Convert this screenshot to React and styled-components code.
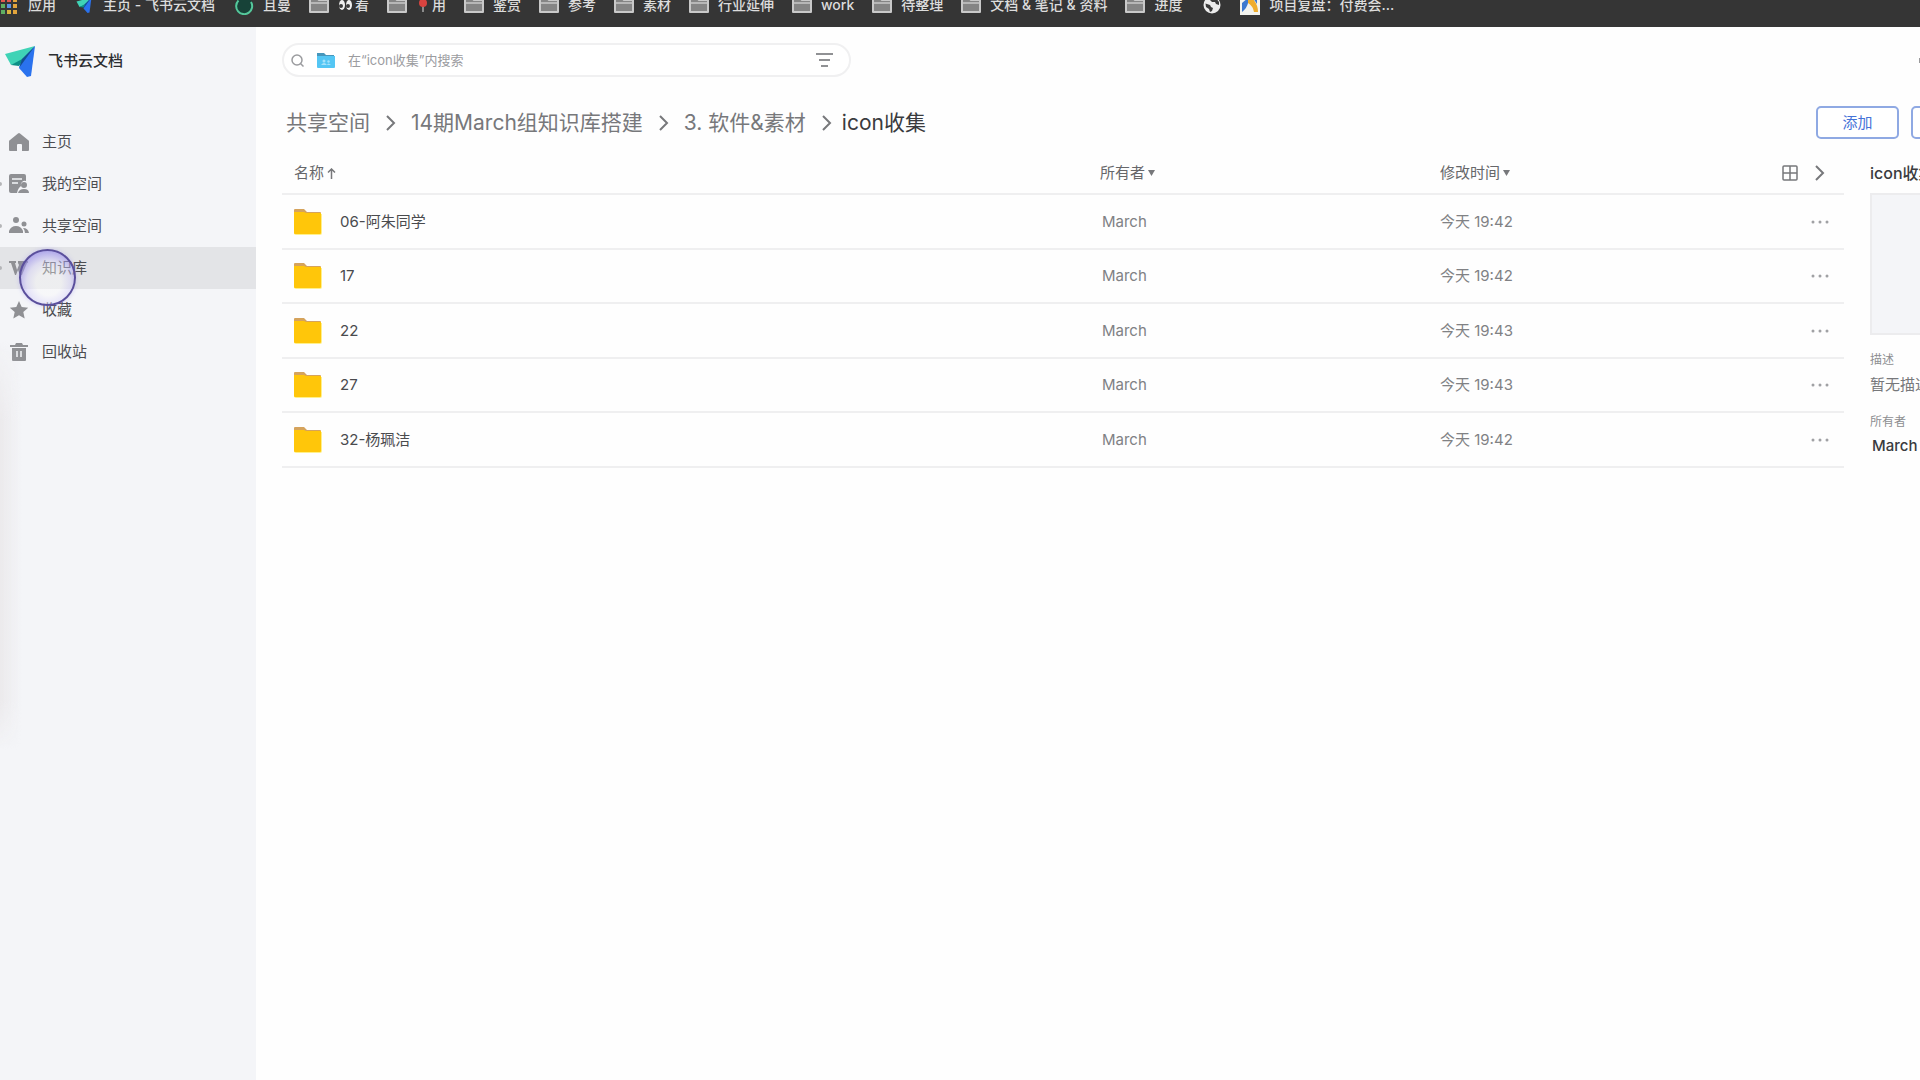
import React from "react";
import styled, { createGlobalStyle } from "styled-components";

const Global = createGlobalStyle`
  *, *::before, *::after { box-sizing: border-box; }
  html, body, #root { height: 100%; margin: 0; }
  body {
    overflow: hidden;
    background: #fefefe;
    color: #4a4b4e;
    font-family: Inter, "Noto Sans CJK SC", sans-serif;
    font-size: 15px;
    line-height: 20px;
  }
  button, input { font: inherit; color: inherit; }
  button { padding: 0; border: 0; background: none; cursor: pointer; }
  a { color: inherit; text-decoration: none; }
  svg { display: block; flex: none; }
`;

const Page = styled.div`
  position: relative;
  display: flex;
  flex-direction: column;
  height: 100%;
  overflow: hidden;
`;

/* Browser bookmarks, cut off by the top of the window */
const Bookmarks = styled.nav`
  display: flex;
  flex: none;
  align-items: flex-start;
  gap: 18px;
  height: 27px;
  overflow: hidden;
  background: #353535;
  color: #dcdcdc;
  font-size: 14px;
  font-weight: 500;
  white-space: nowrap;
`;

const Bookmark = styled.a`
  display: flex;
  align-items: center;
  gap: 9px;
  height: 20px;
  margin-top: -5px;
`;

const BookmarkText = styled.span`
  display: flex;
  align-items: center;
  gap: 2px;
`;

const Body = styled.div`
  display: flex;
  flex: 1;
  min-height: 0;
`;

const Sidebar = styled.aside`
  flex: none;
  width: 256px;
  background: #f4f5f8;
`;

const Brand = styled.a`
  display: flex;
  align-items: center;
  gap: 12px;
  height: 68px;
  padding-left: 4px;
  color: #2b2d31;
  font-weight: 500;
`;

const NavList = styled.ul`
  margin: 26px 0 0;
  padding: 0;
  list-style: none;
`;

const NavLink = styled.a`
  display: flex;
  align-items: center;
  height: 42px;
  background: ${(p) => (p.$active ? "#e3e4e7" : "transparent")};
  color: #4c4d51;
`;

const Expander = styled.span`
  width: 9px;
  height: 4px;
  &::before {
    content: "";
    display: block;
    width: 2px;
    height: 4px;
    border-radius: 0 2px 2px 0;
    background: ${(p) => (p.$shown ? "#b4b5b8" : "transparent")};
  }
`;

const NavText = styled.span`
  margin-left: 13px;
`;

const Main = styled.main`
  display: flex;
  flex: 1;
  flex-direction: column;
  min-width: 0;
  padding-left: 26px;
  overflow: hidden;
`;

const TopBar = styled.header`
  display: flex;
  align-items: center;
  justify-content: space-between;
  height: 66px;
`;

const Search = styled.form`
  display: flex;
  align-items: center;
  width: 569px;
  height: 34px;
  padding: 0 16px 0 7px;
  border: 2px solid #f0f0f1;
  border-radius: 17px;
  background: #fff;
`;

const SearchInput = styled.input`
  flex: 1;
  min-width: 0;
  margin: 0 13px;
  padding: 0;
  border: 0;
  outline: 0;
  background: none;
  font-size: 13px;
  &::placeholder { color: #9b9c9f; opacity: 1; }
`;

const SearchScope = styled.span`
  margin-left: 13px;
`;

const AccountButton = styled.button`
  width: 1px;
  height: 5px;
  background: #9a9a9c;
`;

const PathBar = styled.div`
  display: flex;
  align-items: center;
  height: 59px;
`;

const Crumbs = styled.ol`
  display: flex;
  flex: 1;
  align-items: center;
  margin: 0;
  padding: 0 0 0 4px;
  list-style: none;
  font-size: 21px;
  line-height: 28px;
  white-space: nowrap;
`;

const Crumb = styled.li`
  display: flex;
  align-items: center;
  color: ${(p) => (p.$current ? "#3a3b3e" : "#77787b")};
  svg { margin: 0 ${(p) => (p.$tight ? 10 : 15)}px 0 16px; color: #77787b; }
`;

const Actions = styled.div`
  display: flex;
  flex: none;
  gap: 12px;
  width: 104px;
  overflow: hidden;
`;

const ActionButton = styled.button`
  flex: none;
  width: 83px;
  height: 33px;
  border: 2px solid #8fa9e3;
  border-radius: 5px;
  background: #fff;
  color: #4673d8;
`;

const Content = styled.div`
  display: grid;
  grid-template-columns: minmax(0, 1fr) 50px;
  gap: 26px;
  padding-top: 1px;
`;

const FileTable = styled.table`
  width: 100%;
  border-collapse: separate;
  border-spacing: 0;
  table-layout: fixed;
`;

const Col = styled.col`
  width: ${(p) => p.$width};
`;

const HeadCell = styled.th`
  height: 42px;
  padding: 0 0 0 ${(p) => p.$indent || 0}px;
  border-bottom: 2px solid #efeff0;
  color: #66676a;
  font-weight: 400;
  text-align: left;
`;

const SortButton = styled.button`
  display: flex;
  align-items: center;
  gap: 3px;
`;

const ViewTools = styled.div`
  display: flex;
  align-items: center;
  justify-content: flex-end;
  gap: 17px;
  padding-right: 19px;
  color: #77787b;
`;

const Row = styled.tr`
  height: 55px;
  &:nth-child(even) { height: 54px; }
`;

const Cell = styled.td`
  padding: 0 0 0 ${(p) => p.$indent || 0}px;
  border-bottom: 2px solid #efeff0;
  color: #808184;
`;

const FileLink = styled.a`
  display: flex;
  align-items: center;
  gap: 18px;
  color: #4a4b4e;
`;

const MoreButton = styled.button`
  display: block;
  margin-left: auto;
  padding-right: 14px;
  color: #a0a1a4;
`;

const Panel = styled.aside`
  overflow: hidden;
  white-space: nowrap;
`;

const PanelTitle = styled.h2`
  margin: 0;
  height: 40px;
  color: #3a3b3e;
  font-size: 16px;
  font-weight: 500;
  line-height: 40px;
`;

const Preview = styled.div`
  width: 250px;
  height: 142px;
  margin-bottom: 15px;
  border: 2px solid #ececee;
  background: #f4f5f8;
`;

const PanelLabel = styled.p`
  margin: 0;
  color: #8d8e91;
  font-size: 12px;
`;

const PanelText = styled.p`
  margin: 5px 0 17px;
  color: #77787b;
`;

const PanelOwner = styled.p`
  margin: 4px 0 0;
  padding-left: 2px;
  color: #3a3b3e;
  font-weight: 500;
`;

/* Soft shadow thrown on the page by a window to the left */
const EdgeShade = styled.div`
  position: absolute;
  top: 340px;
  left: 0;
  width: 22px;
  height: 410px;
  background: linear-gradient(90deg, rgba(232, 229, 231, 0.7), rgba(240, 238, 243, 0));
  mask-image: linear-gradient(transparent, #000 20%, #000 88%, transparent);
  pointer-events: none;
`;

/* Click marker of the screen recorder */
const Pointer = styled.div`
  position: absolute;
  top: 249px;
  left: 19px;
  width: 57px;
  height: 57px;
  border: 2px solid #5a4f9c;
  border-radius: 50%;
  background: radial-gradient(circle at 52% 60%, rgba(250, 250, 250, 0.45) 30%, rgba(215, 210, 250, 0.45) 52%, rgba(130, 115, 235, 0.6) 80%);
  box-shadow: 0 0 4px rgba(150, 140, 240, 0.4);
  pointer-events: none;
`;

const Plane = ({ size, box = size }) => (
  <svg width={box} height={size} viewBox="0 0 32 32" aria-hidden="true">
    <path d="M1 9 31 1 22 12 15 17 7 20Z" fill="#3fd3b6" />
    <path d="M7 20 22 12 15 21Z" fill="#0b8f86" />
    <path d="M31 1 27 31 23 32 15 23 18 15Z" fill="#2a72ee" />
    <path d="M31 1 15 23 18 14Z" fill="#124e91" />
  </svg>
);

const AppsIcon = () => (
  <svg width="19" height="20" viewBox="1 0 19 20" aria-hidden="true">
    {["#e0584f", "#e0584f", "#e2a43c", "#5fae62", "#5a93e6", "#e2a43c", "#5fae62", "#d8b23e", "#e2a43c"].map((c, i) => (
      <rect key={i} x={2 + (i % 3) * 6} y={3 + Math.floor(i / 3) * 6} width="4" height="4" fill={c} />
    ))}
  </svg>
);

const RingIcon = () => (
  <svg width="21" height="20" viewBox="0 0 21 20" fill="none" aria-hidden="true">
    <circle cx="11" cy="11" r="9" fill="#174238" />
    <path d="M5.500 5.500A8 8 0 1 0 18 7" stroke="#55c79b" strokeWidth="2" />
  </svg>
);

const FolderOutline = () => (
  <svg width="20" height="20" viewBox="0 0 20 20" aria-hidden="true">
    <path d="M1 4V3h7l2 2h9v12H1Z" fill="#858585" stroke="#c9c9c9" strokeWidth="2" strokeLinejoin="round" />
    <path d="M1 8h18" stroke="#c9c9c9" strokeWidth="1.500" />
  </svg>
);

const Eyes = () => (
  <svg width="15" height="14" viewBox="0 0 15 14" role="img" aria-label="👀">
    <ellipse cx="4" cy="7" rx="3" ry="5" fill="#efefef" />
    <ellipse cx="11" cy="7" rx="3" ry="5" fill="#efefef" />
    <circle cx="3" cy="8" r="2" fill="#3a3a3a" />
    <circle cx="10" cy="8" r="2" fill="#3a3a3a" />
  </svg>
);

const Pin = () => (
  <svg width="14" height="14" viewBox="0 0 14 14" role="img" aria-label="📍">
    <path d="M7 6v8" stroke="#a9a9a9" strokeWidth="1.500" />
    <circle cx="7" cy="5" r="4" fill="#d8433f" />
  </svg>
);

const Globe = () => (
  <svg width="22" height="20" viewBox="0 0 22 20" aria-hidden="true">
    <circle cx="12" cy="10" r="8.500" fill="#ececec" />
    <path d="M5.500 8.500 10 10l1 2 2 1-1 3-2 1-1-3-3-2ZM11 3l5 0 3 4 0 3-3-1-1-2-3 0-2-2Z" fill="#3b3b3b" />
  </svg>
);

const SquareLogo = () => (
  <svg width="20" height="20" viewBox="0 0 20 20" aria-hidden="true">
    <path d="M0 0h20v20H0Z" fill="#f3f3ee" />
    <path d="M2 17V8l6-5v5Q7 13 2 17Z" fill="#3d79cf" />
    <path d="M8 3h4q6 6 6 14h-4Q13 11 8 8Z" fill="#efad2e" />
    <path d="M13 3h4v6Z" fill="#3d79cf" />
  </svg>
);

const BlueFolder = () => (
  <svg width="18" height="18" viewBox="0 0 18 18" aria-hidden="true">
    <path d="M0 2h7l2 2h8v5H0Z" fill="#4796bb" />
    <path d="M0 5h18v11a1 1 0 0 1-1 1H1a1 1 0 0 1-1-1Z" fill="#54c6f4" />
    <circle cx="7" cy="10" r="1.500" fill="#a5e2fa" />
    <circle cx="11.500" cy="10.500" r="1.200" fill="#a5e2fa" />
    <path d="M4 14q3-4 6 0ZM10 14q1-3 4 0Z" fill="#a5e2fa" />
  </svg>
);

const YellowFolder = () => (
  <svg width="28" height="28" viewBox="0 0 28 28" aria-hidden="true">
    <path d="M0 2a1 1 0 0 1 1-1h9l3 3h13a1 1 0 0 1 1 1v6H0Z" fill="#d5a35c" />
    <path d="M0 6h28v19a2 2 0 0 1-2 2H2a2 2 0 0 1-2-2Z" fill="#fff08a" />
    <path d="M0 4h10l2 1h15v20a1 1 0 0 1-1 1H1a1 1 0 0 1-1-1Z" fill="#ffc60a" />
  </svg>
);

const Chevron = ({ width = 10, height = 16 }) => (
  <svg width={width} height={height} viewBox="0 0 10 16" fill="none" stroke="currentColor" strokeWidth="2" aria-hidden="true">
    <path d="m1 1 7 7-7 7" />
  </svg>
);

const navIcons = {
  home: <path d="M9 1.500a1.500 1.500 0 0 1 2 0l8 6.500a2 2 0 0 1 1 1.500V18a1 1 0 0 1-1 1h-6v-6a1 1 0 0 0-1-1H9a1 1 0 0 0-1 1v6H1a1 1 0 0 1-1-1V9.500A2 2 0 0 1 1 8Z" />,
  mine: (
    <>
      <path d="M2 0h13a2 2 0 0 1 2 2v5a4 4 0 0 0-5 5q-3 2-4 7H2a2 2 0 0 1-2-2V2a2 2 0 0 1 2-2Z" />
      <path d="M3 5h10M3 9h6" stroke="#f4f5f8" strokeWidth="1.500" />
      <circle cx="15" cy="11" r="3" />
      <path d="M9 19q1-4 6-4t5 4Z" />
    </>
  ),
  shared: (
    <>
      <circle cx="7" cy="4" r="3" />
      <path d="M0 17v-2q2-5 7-5t7 5v2Z" />
      <circle cx="15" cy="8" r="2.500" />
      <path d="M14 12q5 0 6 5h-4q0-3-2-5Z" />
    </>
  ),
  wiki: <path d="M0 3h7v2H6l2 7 2-5-1-2V3h10v2h-1l-5 12h-2l-2-5-2 5H6L2 5H0Z" />,
  star: <path d="m10 1 2.700 6 6.500.7-4.900 4.400 1.400 6.500L10 15.300l-5.700 3.300 1.400-6.500L.8 7.700 7.300 7Z" />,
  trash: (
    <>
      <path d="M7 1h6l1 2h5v2H1V3h5Z" />
      <path d="M3 6h14v12a1 1 0 0 1-1 1H4a1 1 0 0 1-1-1Z" />
      <path d="M8 9v6M12 9v6" stroke="#f4f5f8" strokeWidth="1.500" />
    </>
  ),
};

const bookmarks = [
  { icon: <AppsIcon />, text: "应用" },
  { icon: <Plane size={16} box={20} />, text: "主页 - 飞书云文档" },
  { icon: <RingIcon />, text: "且曼" },
  { text: "看", mark: <Eyes /> },
  { text: "用", mark: <Pin /> },
  { text: "鉴赏" },
  { text: "参考" },
  { text: "素材" },
  { text: "行业延伸" },
  { text: "work" },
  { text: "待整理" },
  { text: "文档 & 笔记 & 资料" },
  { text: "进度" },
  { icon: <Globe />, label: "网页" },
  { icon: <SquareLogo />, text: "项目复盘：付费会..." },
];

const navItems = [
  { icon: "home", text: "主页" },
  { icon: "mine", text: "我的空间", expandable: true },
  { icon: "shared", text: "共享空间", expandable: true },
  { icon: "wiki", text: "知识库", expandable: true, active: true },
  { icon: "star", text: "收藏" },
  { icon: "trash", text: "回收站" },
];

const crumbs = ["共享空间", "14期March组知识库搭建", "3. 软件&素材", "icon收集"];

const files = [
  { name: "06-阿朱同学", time: "今天 19:42" },
  { name: "17", time: "今天 19:42" },
  { name: "22", time: "今天 19:43" },
  { name: "27", time: "今天 19:43" },
  { name: "32-杨珮洁", time: "今天 19:42" },
];

const SortCaret = () => (
  <svg width="7" height="6" viewBox="0 0 7 6" fill="#77787b" aria-hidden="true"><path d="M0 0h7L3.500 6Z" /></svg>
);

export default function App() {
  return (
    <Page>
      <Global />
      <Bookmarks>
        {bookmarks.map((b, i) => (
          <Bookmark href="#" key={i} aria-label={b.label}>
            {b.icon || <FolderOutline />}
            {b.text && <BookmarkText>{b.mark}{b.text}</BookmarkText>}
          </Bookmark>
        ))}
      </Bookmarks>
      <Body>
        <Sidebar>
          <Brand href="#"><Plane size={32} />飞书云文档</Brand>
          <nav>
            <NavList>
              {navItems.map((n) => (
                <li key={n.text}>
                  <NavLink href="#" $active={n.active}>
                    <Expander $shown={n.expandable} />
                    <svg width="20" height="20" viewBox="0 0 20 20" fill="#8f9094" aria-hidden="true">{navIcons[n.icon]}</svg>
                    <NavText>{n.text}</NavText>
                  </NavLink>
                </li>
              ))}
            </NavList>
          </nav>
        </Sidebar>
        <Main>
          <TopBar>
            <Search>
              <svg width="13" height="13" viewBox="0 0 13 13" fill="none" stroke="#9b9c9f" strokeWidth="1.500" aria-hidden="true">
                <circle cx="6" cy="6" r="5" /><path d="m9.500 9.500 3 3" />
              </svg>
              <SearchScope><BlueFolder /></SearchScope>
              <SearchInput type="text" aria-label="搜索" placeholder="在“icon收集”内搜索" />
              <button type="button" aria-label="筛选">
                <svg width="17" height="14" viewBox="0 0 17 14" stroke="#909194" strokeWidth="2" aria-hidden="true">
                  <path d="M0 1h17M3 7h11M5 13h7" />
                </svg>
              </button>
            </Search>
            <AccountButton aria-label="账户" />
          </TopBar>
          <PathBar>
            <Crumbs>
              {crumbs.map((c, i) => (
                <Crumb key={c} $current={i === crumbs.length - 1} $tight={i === crumbs.length - 2}>
                  <a href="#">{c}</a>
                  {i < crumbs.length - 1 && <Chevron />}
                </Crumb>
              ))}
            </Crumbs>
            <Actions>
              <ActionButton>添加</ActionButton>
              <ActionButton aria-label="分享" />
            </Actions>
          </PathBar>
          <Content>
            <FileTable>
              <colgroup>
                <Col $width="auto" /><Col $width="340px" /><Col $width="300px" /><Col $width="104px" />
              </colgroup>
              <thead>
                <tr>
                  <HeadCell $indent={12}>
                    <SortButton>
                      名称
                      <svg width="9" height="11" viewBox="0 0 9 11" fill="none" stroke="#77787b" strokeWidth="1.500" aria-hidden="true">
                        <path d="M4.500 11V1M1 4.500 4.500 1 8 4.500" />
                      </svg>
                    </SortButton>
                  </HeadCell>
                  <HeadCell><SortButton>所有者<SortCaret /></SortButton></HeadCell>
                  <HeadCell><SortButton>修改时间<SortCaret /></SortButton></HeadCell>
                  <HeadCell>
                    <ViewTools>
                      <button aria-label="宫格视图">
                        <svg width="16" height="16" viewBox="0 0 16 16" fill="none" stroke="currentColor" strokeWidth="1.500" aria-hidden="true">
                          <rect x="1" y="1" width="14" height="14" rx="1" /><path d="M8 1v14M1 8h14" />
                        </svg>
                      </button>
                      <button aria-label="收起详情"><Chevron /></button>
                    </ViewTools>
                  </HeadCell>
                </tr>
              </thead>
              <tbody>
                {files.map((f) => (
                  <Row key={f.name}>
                    <Cell $indent={12}><FileLink href="#"><YellowFolder />{f.name}</FileLink></Cell>
                    <Cell $indent={2}>March</Cell>
                    <Cell>{f.time}</Cell>
                    <Cell>
                      <MoreButton aria-label="更多">
                        <svg width="20" height="4" viewBox="0 0 20 4" fill="currentColor" aria-hidden="true">
                          <circle cx="3" cy="2" r="1.500" /><circle cx="10" cy="2" r="1.500" /><circle cx="17" cy="2" r="1.500" />
                        </svg>
                      </MoreButton>
                    </Cell>
                  </Row>
                ))}
              </tbody>
            </FileTable>
            <Panel>
              <PanelTitle>icon收集</PanelTitle>
              <Preview />
              <PanelLabel>描述</PanelLabel>
              <PanelText>暂无描述</PanelText>
              <PanelLabel>所有者</PanelLabel>
              <PanelOwner>March</PanelOwner>
            </Panel>
          </Content>
        </Main>
      </Body>
      <EdgeShade />
      <Pointer />
    </Page>
  );
}
